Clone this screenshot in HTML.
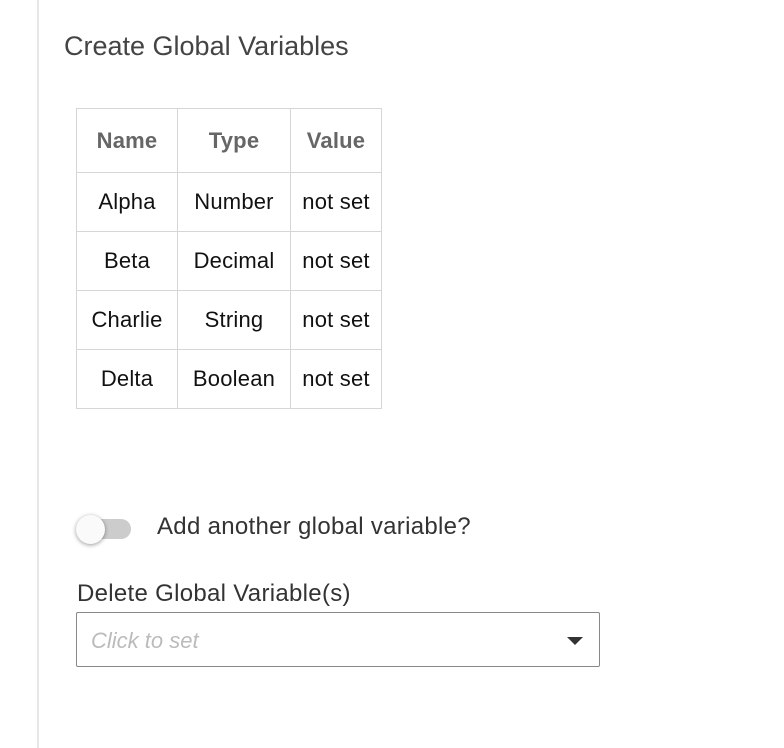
<!DOCTYPE html>
<html><head><style>
body{margin:0;width:784px;height:748px;background:#fff;position:relative;overflow:hidden;font-family:"Liberation Sans",sans-serif}
.vl{position:absolute;left:37px;top:0;width:2px;height:748px;background:#e6e6e6}
h1{position:absolute;left:64px;top:31px;margin:0;font-size:27px;font-weight:normal;color:#444}
table{position:absolute;left:76px;top:108px;border-collapse:collapse}
td,th{border:1px solid #d6d6d6;text-align:center;font-size:22px;color:#111;padding:0;letter-spacing:0.2px}
th{color:#666;height:63px;font-weight:bold}
td{height:58px}
.track{position:absolute;left:79px;top:519px;width:52px;height:20px;border-radius:10px;background:#ccc}
.knob{position:absolute;left:76px;top:515px;width:29px;height:29px;border-radius:50%;background:#fafafa;box-shadow:0 1px 4px rgba(0,0,0,.4)}
.lbl{position:absolute;font-size:24px;color:#333;letter-spacing:0.3px}
.sel{position:absolute;left:76px;top:612px;width:522px;height:53px;border:1px solid #888;border-radius:2px}
.ph{position:absolute;left:14px;top:15px;font-size:22px;font-style:italic;color:#bbb}
.arr{position:absolute;right:16px;top:24px;width:0;height:0;border-left:8px solid transparent;border-right:8px solid transparent;border-top:8px solid #333}
</style></head><body>
<div class="vl"></div>
<h1>Create Global Variables</h1>
<table>
<tr><th style="width:100px">Name</th><th style="width:112px">Type</th><th style="width:90px">Value</th></tr>
<tr><td>Alpha</td><td>Number</td><td>not set</td></tr>
<tr><td>Beta</td><td>Decimal</td><td>not set</td></tr>
<tr><td>Charlie</td><td>String</td><td>not set</td></tr>
<tr><td>Delta</td><td>Boolean</td><td>not set</td></tr>
</table>
<div class="track"></div><div class="knob"></div>
<div class="lbl" style="left:157px;top:513px">Add another global variable?</div>
<div class="lbl" style="left:77px;top:580px">Delete Global Variable(s)</div>
<div class="sel"><div class="ph">Click to set</div><div class="arr"></div></div>
</body></html>
